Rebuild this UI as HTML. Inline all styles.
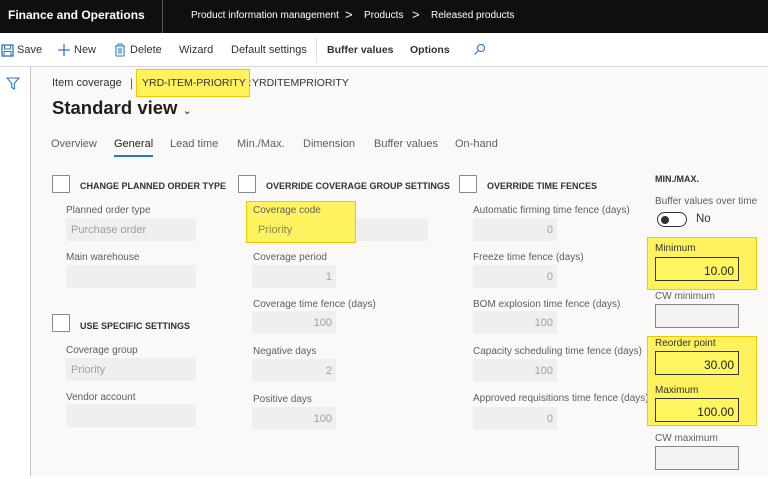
<!DOCTYPE html>
<html><head><meta charset="utf-8"><style>
*{margin:0;padding:0;box-sizing:border-box}
body{width:768px;height:479px;overflow:hidden;background:#fff;font-family:"Liberation Sans",sans-serif;position:relative;color:#323130}
.a{position:absolute;white-space:nowrap}
.top{left:0;top:0;width:768px;height:33px;background:#0f0f0f}
.tb{left:0;top:33px;width:768px;height:34px;background:#fff;border-bottom:1px solid #d8d8d8}
.content{left:31px;top:67px;width:737px;height:409px;background:#faf9f8}
.lstrip{left:30px;top:67px;width:1px;height:409px;background:#c8c6c4}
.tbi{top:44px;font-size:11px;color:#323130}
.lbl{font-size:10px;color:#605e5c}
.in{background:#f0efee;height:23px}
.val{font-size:11px;color:#a19f9d}
.cb{width:18px;height:18px;border:1px solid #8a8886;background:#fff;border-radius:1px}
.hd{font-size:9px;font-weight:bold;color:#323130}
.tab{top:138px;font-size:11px;color:#605e5c}
.yl{background:#fff25c;border:1.5px solid #f0c800}
.yin{background:#fff55e;border:1px solid #333;height:24px;width:84px;font-size:12px;color:#201f1e;text-align:right;padding:6px 4px 0 0}
.gin{background:#f3f2f1;border:1px solid #8a8886;height:24px;width:84px}
</style></head><body>
<div class="a top"></div>
<div class="a" style="left:8px;top:8px;font-size:12px;font-weight:bold;color:#fff">Finance and Operations</div>
<div class="a" style="left:162px;top:0;width:1px;height:33px;background:#555"></div>
<div class="a" style="left:191px;top:10px;font-size:10px;color:#fff">Product information management</div>
<div class="a" style="left:345px;top:7px;font-size:13px;color:#fff">&gt;</div>
<div class="a" style="left:364px;top:10px;font-size:10px;color:#fff">Products</div>
<div class="a" style="left:412px;top:7px;font-size:13px;color:#fff">&gt;</div>
<div class="a" style="left:431px;top:10px;font-size:10px;color:#fff">Released products</div>

<div class="a tb"></div>
<svg class="a" style="left:1px;top:44px" width="13" height="13" viewBox="0 0 13 13"><rect x="1" y="1" width="11" height="11" fill="none" stroke="#2b79c2" stroke-width="1.3"/><rect x="3.5" y="1" width="6" height="4" fill="none" stroke="#2b79c2"/><rect x="3" y="7.5" width="7" height="4.5" fill="none" stroke="#2b79c2"/></svg>
<div class="a tbi" style="left:17px">Save</div>
<svg class="a" style="left:57px;top:43px" width="14" height="14"><path d="M7 1V13M1 7H13" stroke="#2b79c2" stroke-width="1.3"/></svg>
<div class="a tbi" style="left:74px">New</div>
<svg class="a" style="left:114px;top:43px" width="12" height="14"><path d="M1 3H11M4 3V1H8V3M2 3V13H10V3M5 5V11M7 5V11" fill="none" stroke="#2b79c2" stroke-width="1.1"/></svg>
<div class="a tbi" style="left:130px">Delete</div>
<div class="a tbi" style="left:179px">Wizard</div>
<div class="a tbi" style="left:231px">Default settings</div>
<div class="a" style="left:316px;top:38px;width:1px;height:25px;background:#e1dfdd"></div>
<div class="a tbi" style="left:327px;font-weight:bold;font-size:10.5px">Buffer values</div>
<div class="a tbi" style="left:410px;font-weight:bold;font-size:10.5px">Options</div>
<svg class="a" style="left:473px;top:43px" width="13" height="13"><circle cx="8" cy="5" r="3.6" fill="none" stroke="#2b79c2" stroke-width="1.1"/><path d="M5.5 7.5L1.5 11.5" stroke="#2b79c2" stroke-width="1.2"/></svg>

<div class="a content"></div>
<div class="a lstrip"></div>
<svg class="a" style="left:6px;top:77px" width="14" height="13"><path d="M1 1H13L8.3 6.5V12L5.7 10.5V6.5Z" fill="none" stroke="#2b79c2" stroke-width="1.1"/></svg>

<div class="a" style="left:52px;top:77px;font-size:11px;color:#323130">Item coverage</div>
<div class="a" style="left:130px;top:76px;font-size:12px;color:#605e5c">|</div>
<div class="a yl" style="left:136px;top:69px;width:114px;height:28px"></div>
<div class="a" style="left:142px;top:77px;font-size:10.5px;color:#323130">YRD-ITEM-PRIORITY :</div>
<div class="a" style="left:252px;top:77px;font-size:10.5px;color:#323130">YRDITEMPRIORITY</div>
<div class="a" style="left:52px;top:97px;font-size:18.5px;font-weight:bold;color:#201f1e">Standard view <span style="font-size:11px;font-weight:normal">&#8964;</span></div>

<div class="a tab" style="left:51px">Overview</div>
<div class="a tab" style="left:114px;color:#201f1e">General</div>
<div class="a" style="left:114px;top:155px;width:39px;height:2px;background:#2b79c2"></div>
<div class="a tab" style="left:170px">Lead time</div>
<div class="a tab" style="left:237px">Min./Max.</div>
<div class="a tab" style="left:303px">Dimension</div>
<div class="a tab" style="left:374px">Buffer values</div>
<div class="a tab" style="left:455px">On-hand</div>

<div class="a cb" style="left:52px;top:175px"></div>
<div class="a hd" style="left:80px;top:181px">CHANGE PLANNED ORDER TYPE</div>
<div class="a cb" style="left:238px;top:175px"></div>
<div class="a hd" style="left:266px;top:181px">OVERRIDE COVERAGE GROUP SETTINGS</div>
<div class="a cb" style="left:459px;top:175px"></div>
<div class="a hd" style="left:487px;top:181px">OVERRIDE TIME FENCES</div>

<div class="a lbl" style="left:66px;top:205px">Planned order type</div>
<div class="a in" style="left:66px;top:218px;width:130px"></div>
<div class="a val" style="left:71px;top:224px">Purchase order</div>
<div class="a lbl" style="left:66px;top:252px">Main warehouse</div>
<div class="a in" style="left:66px;top:265px;width:130px"></div>
<div class="a cb" style="left:52px;top:314px"></div>
<div class="a hd" style="left:80px;top:321px">USE SPECIFIC SETTINGS</div>
<div class="a lbl" style="left:66px;top:345px">Coverage group</div>
<div class="a in" style="left:66px;top:358px;width:130px"></div>
<div class="a val" style="left:71px;top:364px">Priority</div>
<div class="a lbl" style="left:66px;top:392px">Vendor account</div>
<div class="a in" style="left:66px;top:404px;width:130px"></div>

<div class="a in" style="left:252px;top:218px;width:176px"></div>
<div class="a" style="left:246px;top:201px;width:110px;height:42px;background:rgba(255,242,70,.85);border:1.5px solid #f0c800"></div>
<div class="a lbl" style="left:253px;top:205px">Coverage code</div>
<div class="a val" style="left:258px;top:224px;color:#8a8650">Priority</div>
<div class="a lbl" style="left:253px;top:252px">Coverage period</div>
<div class="a in val" style="left:252px;top:265px;width:84px;text-align:right;padding:6px 4px 0 0">1</div>
<div class="a lbl" style="left:253px;top:299px">Coverage time fence (days)</div>
<div class="a in val" style="left:252px;top:311px;width:84px;text-align:right;padding:6px 4px 0 0">100</div>
<div class="a lbl" style="left:253px;top:346px">Negative days</div>
<div class="a in val" style="left:252px;top:359px;width:84px;text-align:right;padding:6px 4px 0 0">2</div>
<div class="a lbl" style="left:253px;top:394px">Positive days</div>
<div class="a in val" style="left:252px;top:407px;width:84px;text-align:right;padding:6px 4px 0 0">100</div>

<div class="a lbl" style="left:473px;top:205px">Automatic firming time fence (days)</div>
<div class="a in val" style="left:473px;top:218px;width:84px;text-align:right;padding:6px 4px 0 0">0</div>
<div class="a lbl" style="left:473px;top:252px">Freeze time fence (days)</div>
<div class="a in val" style="left:473px;top:265px;width:84px;text-align:right;padding:6px 4px 0 0">0</div>
<div class="a lbl" style="left:473px;top:299px">BOM explosion time fence (days)</div>
<div class="a in val" style="left:473px;top:311px;width:84px;text-align:right;padding:6px 4px 0 0">100</div>
<div class="a lbl" style="left:473px;top:346px">Capacity scheduling time fence (days)</div>
<div class="a in val" style="left:473px;top:359px;width:84px;text-align:right;padding:6px 4px 0 0">100</div>
<div class="a lbl" style="left:473px;top:393px">Approved requisitions time fence (days)</div>
<div class="a in val" style="left:473px;top:407px;width:84px;text-align:right;padding:6px 4px 0 0">0</div>

<div class="a hd" style="left:655px;top:174px">MIN./MAX.</div>
<div class="a lbl" style="left:655px;top:196px">Buffer values over time</div>
<div class="a" style="left:657px;top:212px;width:30px;height:15px;border:1px solid #323130;border-radius:8px;background:#fff"></div>
<div class="a" style="left:661px;top:216px;width:8px;height:8px;border-radius:50%;background:#323130"></div>
<div class="a" style="left:696px;top:213px;font-size:11.5px">No</div>

<div class="a yl" style="left:647px;top:237px;width:110px;height:53px"></div>
<div class="a lbl" style="left:655px;top:243px;color:#323130">Minimum</div>
<div class="a yin" style="left:655px;top:257px">10.00</div>
<div class="a lbl" style="left:655px;top:291px">CW minimum</div>
<div class="a gin" style="left:655px;top:304px"></div>
<div class="a yl" style="left:647px;top:336px;width:110px;height:90px"></div>
<div class="a lbl" style="left:655px;top:338px;color:#323130">Reorder point</div>
<div class="a yin" style="left:655px;top:351px">30.00</div>
<div class="a lbl" style="left:655px;top:385px;color:#323130">Maximum</div>
<div class="a yin" style="left:655px;top:398px">100.00</div>
<div class="a lbl" style="left:655px;top:433px">CW maximum</div>
<div class="a gin" style="left:655px;top:446px"></div>
</body></html>
